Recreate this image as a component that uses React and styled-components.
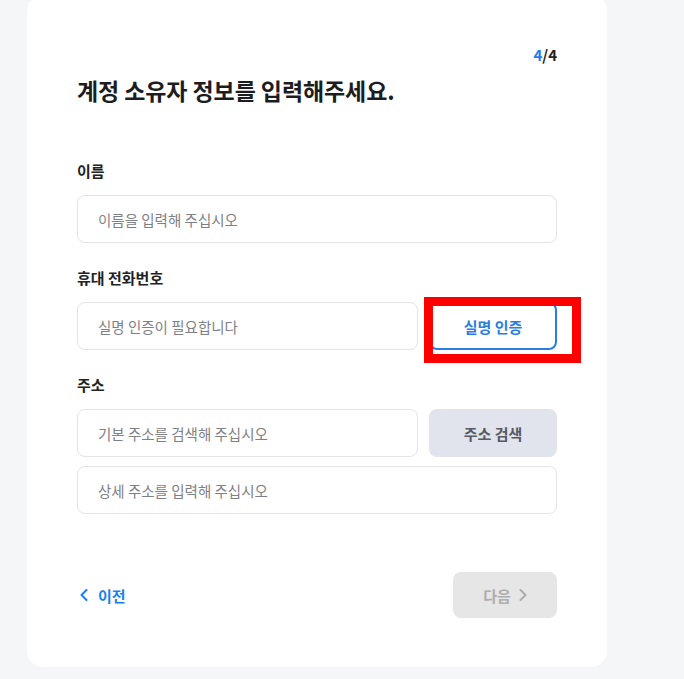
import React, { useState } from "react";
import styled, { createGlobalStyle } from "styled-components";

const GlobalStyle = createGlobalStyle`
  * { box-sizing: border-box; }
  html, body {
    margin: 0;
    padding: 0;
    background: #f5f6f8;
    font-family: "Noto Sans CJK KR", "Noto Sans", sans-serif;
    overflow: hidden;
  }
`;

const Page = styled.div`
  width: 684px;
  height: 679px;
  padding-left: 27px;
`;

const Card = styled.form`
  width: 580px;
  height: 672px;
  margin-top: -5px;
  background: #ffffff;
  border-radius: 16px;
  padding: 50px 50px 49px;
  display: flex;
  flex-direction: column;
`;

const Step = styled.div`
  align-self: flex-end;
  font-size: 15px;
  font-weight: 700;
  line-height: 20px;
  color: #222;
  span {
    color: #1a7ff0;
  }
`;

const Title = styled.h1`
  margin: 10px 0 56px;
  font-size: 23px;
  line-height: 30px;
  font-weight: 700;
  color: #1d1d1f;
  letter-spacing: -0.1px;
`;

const Field = styled.div`
  display: flex;
  flex-direction: column;
  margin-bottom: 25px;
`;

const Label = styled.label`
  font-size: 15px;
  line-height: 20px;
  font-weight: 700;
  color: #222;
  margin-bottom: 14px;
`;

const Row = styled.div`
  display: flex;
  gap: 11px;
  & + & {
    margin-top: 9px;
  }
`;

const Input = styled.input`
  flex: 1;
  min-width: 0;
  height: 48px;
  border: 1px solid #e3e4e6;
  border-radius: 8px;
  padding: 0 20px;
  font-family: inherit;
  font-size: 14.5px;
  color: #222;
  outline: none;
  background: #fff;
  &::placeholder {
    color: #7f8085;
  }
`;

const SideButton = styled.button`
  flex: 0 0 128px;
  height: 48px;
  border-radius: 8px;
  font-family: inherit;
  font-size: 15px;
  font-weight: 700;
  cursor: pointer;
  border: ${(p) => (p.$outline ? "2px solid #2a7de1" : "none")};
  background: ${(p) => (p.$outline ? "#ffffff" : "#e1e4ec")};
  color: ${(p) => (p.$outline ? "#2a7de1" : "#555a64")};
`;

const Highlight = styled.div`
  position: relative;
  display: flex;
  &::after {
    content: "";
    position: absolute;
    left: -5px;
    right: -24px;
    top: -5px;
    bottom: -13px;
    border: 9px solid #ff0000;
    pointer-events: none;
  }
`;

const Footer = styled.div`
  margin-top: auto;
  display: flex;
  align-items: center;
  justify-content: space-between;
`;

const BackLink = styled.button`
  display: flex;
  align-items: center;
  gap: 10px;
  padding: 0 0 0 3px;
  border: none;
  background: none;
  font-family: inherit;
  font-size: 15px;
  font-weight: 700;
  color: #1a7ff0;
  cursor: pointer;
`;

const NextButton = styled.button`
  width: 104px;
  height: 46px;
  border: none;
  border-radius: 8px;
  background: #e6e6e6;
  color: #adadad;
  font-family: inherit;
  font-size: 15px;
  font-weight: 700;
  display: flex;
  align-items: center;
  justify-content: center;
  gap: 8px;
`;

const Chevron = ({ dir }) => (
  <svg width="8" height="12" viewBox="0 0 8 12" fill="none">
    <path
      d={dir === "left" ? "M6.5 1L1.5 6l5 5" : "M1.5 1l5 5-5 5"}
      stroke="currentColor"
      strokeWidth="2"
      strokeLinecap="round"
      strokeLinejoin="round"
    />
  </svg>
);

const App = () => {
  const [form, setForm] = useState({ name: "", phone: "", addr: "", detail: "" });
  const onChange = (e) => setForm({ ...form, [e.target.name]: e.target.value });

  return (
    <Page>
      <GlobalStyle />
      <Card onSubmit={(e) => e.preventDefault()}>
        <Step>
          <span>4</span>/4
        </Step>
        <Title>계정 소유자 정보를 입력해주세요.</Title>

        <Field>
          <Label>이름</Label>
          <Row>
            <Input name="name" value={form.name} onChange={onChange} placeholder="이름을 입력해 주십시오" />
          </Row>
        </Field>

        <Field>
          <Label>휴대 전화번호</Label>
          <Row>
            <Input name="phone" value={form.phone} onChange={onChange} placeholder="실명 인증이 필요합니다" readOnly />
            <Highlight>
              <SideButton type="button" $outline>
                실명 인증
              </SideButton>
            </Highlight>
          </Row>
        </Field>

        <Field>
          <Label>주소</Label>
          <Row>
            <Input name="addr" value={form.addr} onChange={onChange} placeholder="기본 주소를 검색해 주십시오" />
            <SideButton type="button">주소 검색</SideButton>
          </Row>
          <Row>
            <Input name="detail" value={form.detail} onChange={onChange} placeholder="상세 주소를 입력해 주십시오" />
          </Row>
        </Field>

        <Footer>
          <BackLink type="button">
            <Chevron dir="left" />
            이전
          </BackLink>
          <NextButton type="submit" disabled>
            다음
            <Chevron dir="right" />
          </NextButton>
        </Footer>
      </Card>
    </Page>
  );
};

export default App;
